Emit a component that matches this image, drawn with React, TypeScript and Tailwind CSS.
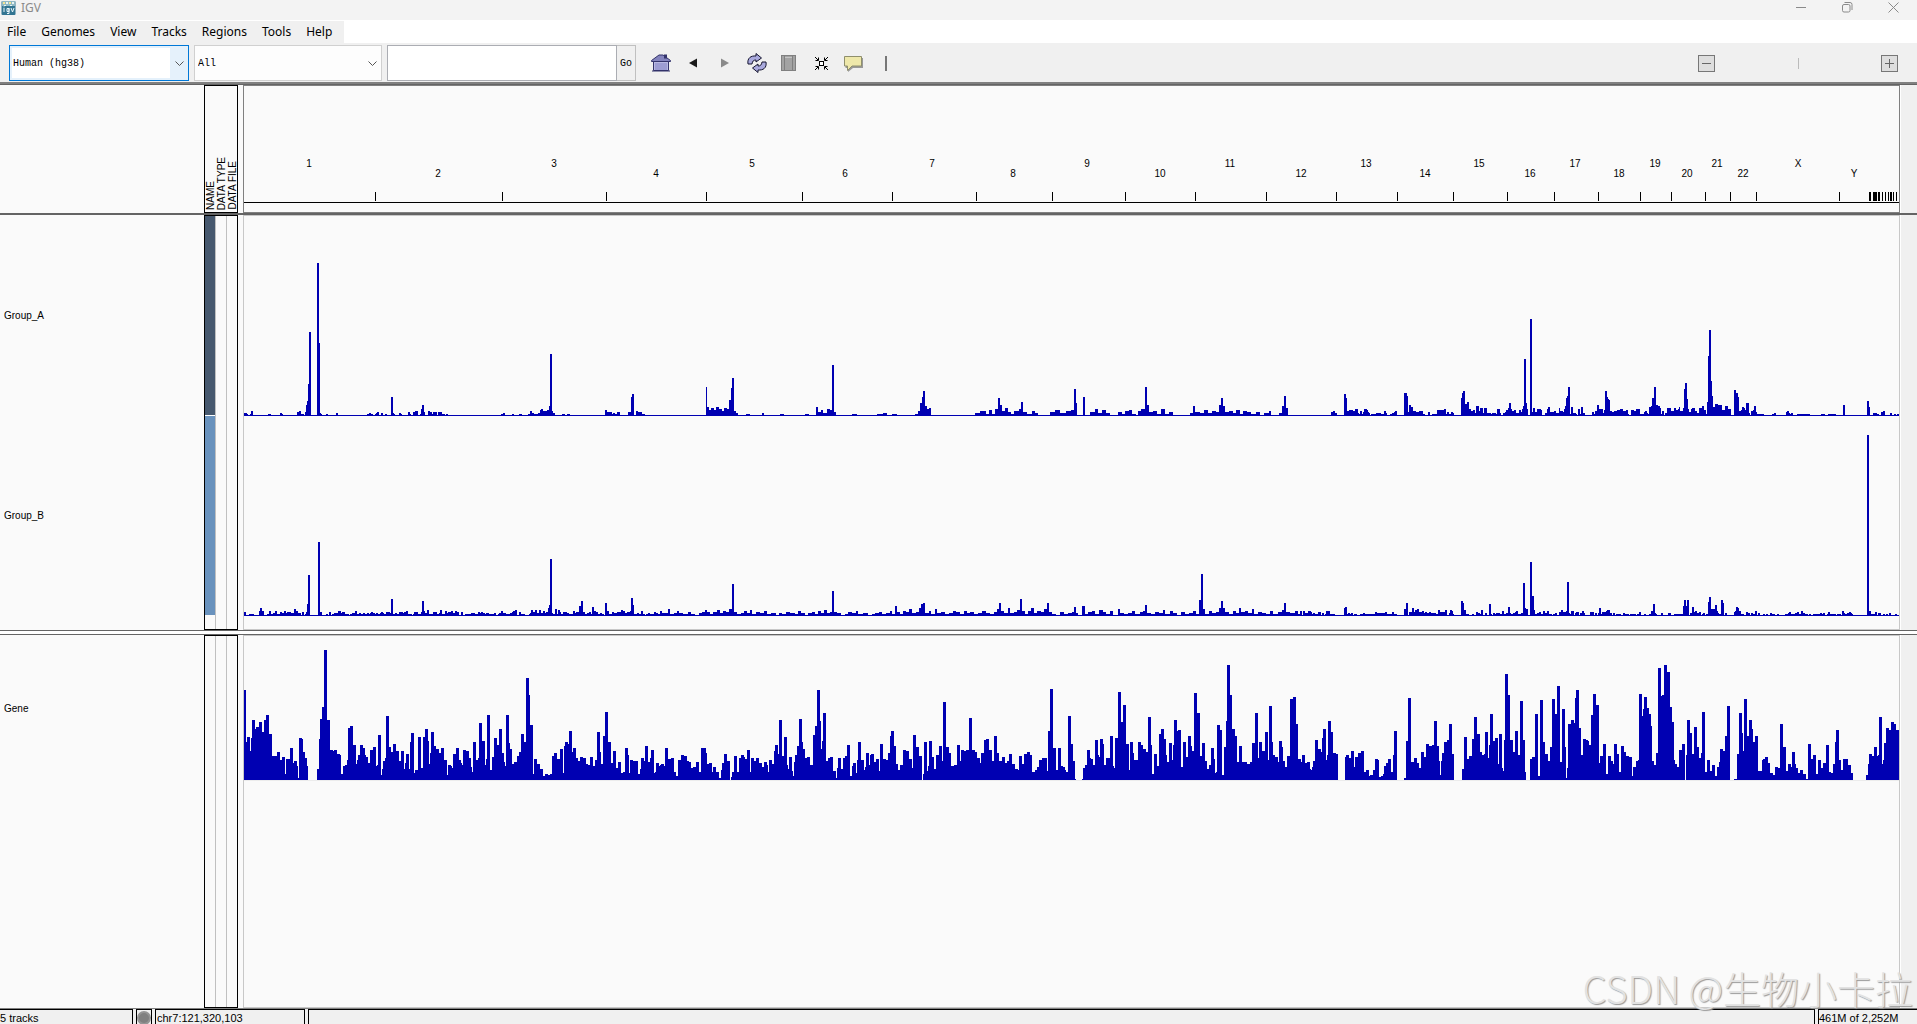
import React from 'react';

interface Segment {
  start: number;
  unit: number;
  base: number;
  steps: string;
}

interface Chromosome {
  name: string;
  x: number;
}

const PLOT_WIDTH = 1655;

const chromosomes: Chromosome[] = [
  { name: '1', x: 65 }, { name: '2', x: 194 }, { name: '3', x: 310 }, { name: '4', x: 412 },
  { name: '5', x: 508 }, { name: '6', x: 601 }, { name: '7', x: 688 }, { name: '8', x: 769 },
  { name: '9', x: 843 }, { name: '10', x: 916 }, { name: '11', x: 986 }, { name: '12', x: 1057 },
  { name: '13', x: 1122 }, { name: '14', x: 1181 }, { name: '15', x: 1235 }, { name: '16', x: 1286 },
  { name: '17', x: 1331 }, { name: '18', x: 1375 }, { name: '19', x: 1411 }, { name: '20', x: 1443 },
  { name: '21', x: 1473 }, { name: '22', x: 1499 }, { name: 'X', x: 1554 }, { name: 'Y', x: 1610 },
];

// [x, width]
const ticks = [
  [131, 1], [258, 1], [362, 1], [462, 1], [558, 1], [648, 1], [732, 1], [808, 1], [881, 1], [951, 1],
  [1022, 1], [1092, 1], [1153, 1], [1209, 1], [1263, 1], [1310, 1], [1354, 1], [1396, 1], [1427, 1],
  [1461, 1], [1486, 1], [1512, 1], [1595, 1], [1625, 2], [1629, 4], [1634, 2], [1638, 1], [1641, 1],
  [1644, 1], [1646, 2], [1649, 1], [1652, 1],
];

// every step is "x,top" and holds until the next x
const groupA: Segment[] = [
  {
    start: -162, unit: 1, base: 705,
    steps: '162,699 171,702 174,705 180,702 183,693 189,705 234,702 243,705 270,699 276,702 279,705 321,696 327,693 333,702 342,705 345,696 348,675 351,663 354,612 357,456 363,705 381,249 387,489 390,699 393,702 396,705 408,702 414,705 438,699 444,705 531,702 537,699 543,702 549,705 555,702 558,699 561,696 567,705 573,699 579,705 585,702 591,705 603,651 609,699 612,702 615,705 627,699 633,702 636,705 654,696 660,702 663,705 669,696 675,693 684,705 690,702 693,687 696,675 702,696 705,705 714,693 720,696 726,702 729,696 741,705 744,696 756,702 765,705 768,702 774,705 933,702 939,699 945,705 966,702 972,705 987,702 996,705 1014,702 1020,693 1026,699 1032,702 1044,699 1050,690 1053,687 1059,693 1071,690 1077,678 1080,522 1086,693 1089,699 1095,705 1116,702 1125,705 1131,702 1140,705 1245,690 1251,696 1266,702 1269,699 1275,702 1281,696 1290,705 1314,696 1323,651 1326,642 1332,705 1338,693 1344,696 1356,702 1365,705',
  },
  {
    start: 1278, unit: 1, base: 600,
    steps: '108,516 111,576 117,585 123,579 132,585 138,576 147,582 156,588 162,579 171,582 177,555 183,520 186,490 192,588 198,594 204,600 228,597 240,600 276,594 282,600 330,597 342,600 405,597 417,600 438,576 444,591 453,585 460,594 470,582 480,585 486,450 492,591 498,600 546,597 560,600 620,597 640,594 652,600 665,597 680,600 735,597 744,588 750,564 756,546 759,527 765,573 771,582 777,579 783,600 915,594 930,588 948,597 957,585 966,597 975,582 984,549 990,570 996,588 1005,579 1014,591 1023,597 1032,588 1047,582 1053,560 1059,591 1071,597 1086,588 1095,594 1104,600 1140,591 1155,585 1170,594 1188,588 1203,585 1212,522 1218,564 1221,600 1239,546 1245,600 1260,591 1275,582 1284,594 1296,585 1308,594 1320,600 1344,591 1356,597 1365,588 1377,585 1386,597 1398,600 1404,588 1413,582 1425,515 1431,570 1437,591 1449,588 1461,597 1473,582 1485,597 1497,591 1509,600 1560,594 1569,573 1575,591 1590,594 1602,585 1614,594 1626,588 1638,591 1647,570 1653,549 1659,573 1665,591 1677,588 1689,594 1698,585 1710,597 1719,588 1731,591 1743,597 1758,591 1770,600 1782,594 1797,588 1803,600 1827,594 1836,573 1842,544 1848,579 1854,600',
  },
  {
    start: 3168, unit: 1.1805, base: 345,
    steps: '79,336 84,333 89,339 94,345 112,282 117,294 119,333 125,330 135,333 140,327 147,339 150,342 152,333 158,342 160,336 163,327 170,330 173,336 175,339 178,345 180,342 193,339 206,342 213,333 218,339 221,345 229,342 234,339 239,336 241,333 246,345 264,279 271,288 274,336 277,315 282,321 287,333 295,336 302,333 313,342 318,345 325,336 330,345 335,342 348,330 366,327 371,342 374,336 379,342 384,336 389,339 391,345 409,294 412,279 414,273 419,312 424,306 429,327 434,333 440,330 445,339 447,318 454,333 457,324 464,339 468,324 474,333 475,339 485,342 488,339 498,342 501,327 508,339 512,345 515,339 521,336 524,330 528,324 531,309 536,327 538,333 544,330 549,339 557,330 562,336 565,327 567,318 569,177 574,309 577,327 579,345 585,57 590,336 592,324 597,336 602,327 612,330 615,345 623,339 628,327 630,321 635,336 645,333 650,339 658,324 662,333 668,336 671,327 673,318 676,294 679,288 681,261 686,342 689,321 694,339 701,342 704,345 706,327 711,342 714,321 719,339 724,345 742,336 747,342 750,333 755,315 760,327 770,339 773,330 775,273 780,291 783,297 785,300 788,333 793,336 798,333 806,330 813,327 821,333 828,330 834,342 836,345 841,330 849,333 854,327 864,342 874,336 877,333 882,339 885,342 887,321 892,318 895,294 900,261 905,315 910,318 915,324 917,342 920,333 925,345 928,339 933,324 943,333 950,324 956,330 960,327 963,321 966,333 973,324 976,267 978,249 983,297 986,327 988,336 994,327 997,324 1004,333 1009,339 1014,324 1022,318 1027,330 1032,342 1034,306 1037,168 1039,90 1044,243 1047,288 1050,321 1055,312 1062,315 1072,330 1080,318 1088,327 1095,345 1103,270 1108,279 1113,291 1116,333 1121,330 1123,321 1128,324 1131,330 1134,309 1140,306 1142,339 1144,345 1146,333 1151,330 1154,318 1159,336 1161,342 1179,345 1200,342 1205,339 1210,345 1235,336 1238,333 1243,339 1246,342 1248,339 1253,345 1263,342 1296,345 1324,342 1334,345 1342,342 1362,345 1380,315 1385,345 1441,303 1446,321 1449,345 1456,339 1466,342 1471,345 1477,336 1482,333 1487,345 1499,339 1504,345 1510,342 1514,345 1517,342 1522,345',
  },
];

const groupB: Segment[] = [
  {
    start: -162, unit: 1, base: 225,
    steps: '162,216 168,225 177,222 192,225 207,213 210,204 216,213 222,225 231,222 237,213 243,222 249,219 255,213 261,222 270,216 276,219 282,213 288,219 291,216 303,219 312,207 318,213 324,219 333,225 336,216 342,225 345,222 348,216 351,192 354,105 360,225 384,6 390,216 396,225 408,222 414,225 417,216 423,225 426,222 432,219 444,213 453,219 456,216 465,222 477,225 480,222 486,219 495,213 501,222 507,219 513,222 519,219 525,222 531,219 537,222 540,219 543,216 549,219 555,222 558,219 564,222 570,219 573,216 579,219 582,222 588,216 600,219 603,177 609,222 615,219 621,222 627,216 639,219 642,216 648,213 654,222 666,225 669,222 672,216 684,222 693,216 696,183 702,213 705,219 711,210 717,222 729,216 741,222 747,219 750,210 756,222 765,213 771,219 774,216 783,213 789,219 795,213 801,216 807,225 813,216 819,225 825,222 843,219 855,222 864,216 870,219 873,216 879,219 885,222 888,219 897,222 912,219 918,225 924,222 927,219 933,213 939,219 948,222 960,219 966,216 969,213 975,210 981,225 987,216 993,222 1005,225 1017,222 1020,219 1023,210 1029,216 1035,210 1041,219 1047,210 1053,219 1059,213 1065,219 1068,216 1074,204 1077,195 1080,57 1086,219 1089,222 1095,207 1101,222 1104,210 1110,216 1113,222 1119,216 1131,219 1137,222 1149,213 1155,219 1158,216 1167,198 1173,183 1179,216 1185,222 1191,219 1197,216 1203,222 1206,201 1212,213 1218,216 1224,222 1230,219 1236,222 1242,225 1245,189 1251,213 1257,222 1266,216 1272,219 1281,216 1293,210 1299,213 1305,219 1311,216 1320,213 1323,174 1329,195 1332,222 1341,219 1347,222 1353,213 1359,222 1365,225 1368,222 1374,219 1380,222 1392,216 1398,219 1404,222 1410,213 1416,219 1434,207 1440,222',
  },
  {
    start: 1278, unit: 1, base: 600,
    steps: '0,597 12,594 21,588 27,594 39,597 54,591 63,597 75,600 87,594 96,591 105,585 111,591 120,597 129,591 141,585 150,594 159,588 168,591 177,582 186,507 192,591 201,597 213,594 222,588 231,594 240,585 246,597 258,591 270,594 282,588 291,597 303,594 318,600 327,594 336,597 348,591 360,594 375,597 384,588 393,594 405,600 414,594 426,591 435,597 444,588 453,594 462,585 471,594 480,591 486,528 492,591 501,594 513,600 525,597 534,591 546,594 558,588 564,597 579,594 594,600 606,597 615,594 627,591 636,597 648,594 660,588 666,597 675,573 681,591 690,597 699,588 708,591 717,582 726,594 738,591 747,579 753,567 759,564 765,594 777,588 783,597 795,582 801,594 813,591 825,597 837,594 849,588 858,591 870,597 882,588 891,594 900,591 912,597 924,594 936,588 948,594 960,597 972,591 981,582 987,564 993,588 1002,594 1014,579 1020,594 1032,591 1041,585 1050,551 1056,588 1065,597 1074,588 1083,579 1092,594 1101,588 1113,591 1122,582 1131,564 1137,591 1146,597 1158,600 1170,591 1182,597 1194,594 1206,591 1212,576 1218,594 1224,600 1236,573 1245,597 1254,591 1266,588 1275,597 1287,585 1299,591 1308,597 1320,588 1329,600 1344,582 1350,594 1362,597 1374,594 1386,588 1395,597 1410,591 1419,588 1425,570 1431,594 1443,597 1455,591 1467,594 1479,585 1485,597 1500,588 1509,594 1521,600 1533,591 1545,597 1557,594 1569,588 1578,597 1587,555 1593,478 1599,582 1605,597 1617,588 1626,594 1638,591 1647,579 1653,558 1659,579 1665,591 1677,597 1689,588 1698,594 1707,579 1713,591 1725,588 1734,594 1746,582 1752,597 1764,591 1776,594 1788,597 1800,588 1809,597 1824,591 1836,585 1842,564 1848,591 1860,594 1875,588 1884,597',
  },
  {
    start: 3168, unit: 1.1805, base: 945,
    steps: '0,933 5,945 8,933 13,939 20,933 27,936 30,942 33,939 38,942 46,936 53,945 56,939 61,945 64,942 66,933 76,942 89,945 112,924 114,921 119,942 122,939 127,942 130,939 135,945 137,942 145,945 152,942 160,939 165,942 191,936 196,939 216,936 221,942 234,936 239,942 246,945 264,927 269,909 274,945 277,936 285,924 290,936 293,930 297,927 302,936 310,933 315,939 318,936 323,939 328,936 333,939 346,942 351,930 356,936 368,930 374,945 379,939 381,930 387,933 389,942 391,945 409,903 414,909 417,930 422,942 429,945 437,942 442,945 447,936 452,939 457,942 460,930 465,945 470,939 475,945 480,912 485,942 488,945 490,939 495,942 498,939 508,942 513,933 518,942 524,939 529,921 534,939 537,942 541,939 547,936 550,933 554,942 562,939 567,849 572,924 574,927 579,945 585,786 590,888 595,930 597,942 602,939 607,936 612,942 618,933 623,939 628,933 633,942 640,945 643,942 648,939 653,945 658,936 663,930 668,936 676,933 679,846 684,939 686,942 689,933 696,945 699,939 701,936 709,945 711,939 716,933 721,939 724,945 737,936 747,945 750,939 755,945 757,939 760,924 765,942 767,936 777,933 780,930 788,939 793,945 795,939 800,945 803,942 816,945 821,939 826,942 836,945 839,942 854,945 857,942 862,936 867,945 874,942 879,945 887,942 892,933 897,912 902,939 905,942 907,945 917,939 923,945 935,939 943,945 950,942 973,918 976,900 981,918 983,900 988,945 991,939 996,921 1001,936 1004,933 1009,939 1014,936 1019,945 1022,942 1024,939 1029,945 1032,942 1037,906 1039,891 1044,927 1055,915 1060,933 1062,939 1065,942 1070,900 1075,909 1078,945 1080,939 1085,945 1103,936 1106,933 1108,921 1113,924 1116,933 1121,942 1128,945 1133,936 1138,939 1144,945 1146,939 1151,942 1156,933 1161,945 1164,939 1169,945 1177,942 1182,945 1184,942 1189,945 1195,939 1200,942 1207,945 1212,942 1217,945 1233,942 1240,939 1243,936 1248,942 1258,939 1263,936 1268,942 1273,933 1278,939 1283,942 1291,945 1294,942 1299,945 1304,942 1322,939 1327,942 1329,939 1334,945 1339,942 1342,936 1347,942 1362,945 1365,942 1375,945 1377,933 1382,939 1385,942 1390,939 1395,936 1400,939 1403,942 1405,945 1441,405 1446,933 1451,942 1461,936 1466,945 1469,939 1476,945 1482,942 1487,945 1490,942 1494,945 1497,939 1502,945 1512,942 1517,945',
  },
];

const gene: Segment[] = [
  {
    start: -12, unit: 1, base: 420,
    steps: '12,150 18,306 21,291 30,333 33,294 36,240 45,267 48,261 57,246 66,276 72,240 78,225 87,282 96,348 111,336 120,360 126,351 135,402 138,357 150,324 159,369 162,363 171,378 174,414 177,294 186,297 189,336 195,354 201,378 204,420 231,387 237,297 240,237 246,201 252,30 261,240 270,330 279,333 282,330 291,342 300,345 303,402 309,378 315,375 321,360 324,264 330,258 339,315 348,372 351,360 354,345 360,315 369,324 375,345 378,351 384,369 390,330 399,321 408,378 411,375 414,285 423,405 426,387 429,363 435,354 438,228 447,321 453,336 459,312 468,333 477,363 483,333 492,387 495,369 498,342 507,387 510,306 513,279 522,399 525,390 534,291 543,384 549,291 555,267 564,303 567,372 570,339 573,276 582,318 588,327 597,339 603,324 612,360 621,405 624,375 633,378 636,384 639,342 648,324 657,360 663,369 666,375 669,330 678,333 687,354 693,381 696,396 699,306 708,360 714,354 717,249 726,303 735,375 738,357 741,225 750,390 756,351 762,294 771,315 777,267 786,339 792,366 795,378 798,225 807,309 810,327 816,372 822,366 831,348 837,336 843,282 852,306 858,114 867,165 870,255 879,402 882,357 891,372 900,387 909,408 915,402 924,405 930,402 936,348 942,339 951,357 960,327 969,399 972,318 975,306 984,312 987,273 996,336 999,324 1008,354 1014,363 1020,351 1029,354 1038,372 1044,375 1050,351 1059,378 1065,360 1071,276 1080,336 1083,372 1089,288 1095,216 1104,306 1113,369 1119,333 1128,384 1134,366 1143,399 1149,396 1155,324 1164,345 1167,399 1170,360 1179,363 1194,402 1200,387 1203,354 1212,363 1215,318 1224,366 1230,354 1233,330 1242,399 1245,396 1248,369 1257,378',
  },
  {
    start: 1248, unit: 1, base: 420,
    steps: '0,375 3,372 12,378 15,324 24,357 33,354 42,396 48,408 54,360 63,345 72,348 81,363 87,366 93,384 99,381 108,366 117,396 123,324 138,339 141,372 147,369 156,396 159,381 168,396 177,414 183,390 186,369 192,342 201,363 210,420 213,411 216,396 222,348 231,396 237,354 243,345 252,351 255,357 261,330 270,396 273,354 282,363 288,354 297,369 306,381 312,366 321,375 324,396 327,360 336,372 342,333 345,315 354,342 357,240 366,348 372,291 381,375 384,387 387,351 396,393 399,408 402,366 405,345 411,318 417,237 426,306 429,327 435,354 441,351 450,375 459,285 465,258 471,150 480,243 483,327 486,303 489,219 498,363 504,354 510,351 519,393 528,414 531,384 534,354 543,387 549,354 555,348 561,315 570,408 576,378 579,369 588,399 591,360 594,306 603,360 612,390 615,381 618,339 627,375 630,345 633,342 642,366 648,357 657,393 660,312 669,357 678,360 684,339 690,288 693,273 702,318 708,372 714,390 720,375 729,330 738,333 747,357 756,384 759,285 768,321 777,348 786,420 789,402 792,306 801,393 804,378 807,303 816,351 822,387 828,345 837,318 846,363 849,186 858,321 867,339 873,378 882,375 891,315 900,363 903,330 912,333 918,330 927,234 936,330 945,336 951,354 960,369 963,339 972,300 978,297 987,330 996,363 1002,288 1011,339 1017,363 1026,351 1035,369 1041,363 1047,342 1056,372 1065,387 1074,390 1077,348 1086,372 1092,342 1101,336 1110,345 1116,396 1125,390 1131,381 1137,360 1146,354 1161,393 1164,273 1170,147 1179,324 1188,390 1194,324 1203,378 1209,381 1215,390 1218,396 1224,228 1233,312 1239,363 1245,417 1248,420',
  },
  {
    start: 2508, unit: 1, base: 420,
    steps: '6,417 9,384 15,375 21,330 30,354 33,357 39,375 45,300 54,345 57,351 60,297 69,312 72,375 78,354 90,288 99,378 102,384 105,294 114,156 123,246 129,195 138,312 147,390 150,306 159,339 162,360 174,306 183,315 189,327 198,336 204,231 213,315 216,402 222,342 231,378 237,282 243,267 252,297 258,345 261,366 267,309 276,360 279,315 282,240 291,273 294,270 303,381 309,306 318,351 324,288 333,318 336,333 342,159 351,219 360,348 366,309 375,363 381,387 387,375 393,324 402,357 405,399 408,396 411,255 420,270 426,405 432,321 438,243 441,75 450,165 456,267 465,288 471,366 477,318 486,366 501,372 510,366 516,309 525,219 534,354 537,306 546,333 555,276 564,360 567,198 576,306 579,345 585,351 594,366 597,303 606,321 609,363 615,381 621,348 630,177 639,171 648,252 654,357 663,366 666,345 675,369 681,366 690,387 693,390 696,381 699,363 705,300 714,327 723,336 726,294 729,267 738,360 741,345 744,243 753,276 759,339 768,342 774,420 795,351 798,345 807,354 813,333 822,381 825,351 834,339 843,333 852,396 858,390 867,408 870,405 879,390 885,357 894,360 897,411 903,408 909,402 912,378 918,369 924,357 933,396 939,345 942,273 951,420 972,414 978,303 984,174 993,366 1002,354 1011,369 1017,384 1023,336 1032,351 1038,312 1047,318 1056,315 1062,243 1071,318 1077,363 1080,405 1083,363 1086,339 1092,306 1101,300 1107,252 1116,342 1122,420 1146,387 1152,291 1161,357 1167,348 1176,297 1182,231 1191,282 1200,336 1206,345 1212,342 1215,276 1224,354 1227,315',
  },
  {
    start: 3738, unit: 1, base: 420,
    steps: '0,222 9,303 15,294 24,372 27,282 36,384 39,393 42,300 45,102 54,165 60,300 69,336 75,273 84,345 90,183 99,300 105,396 108,420 120,357 126,351 135,222 144,408 150,180 159,306 165,342 174,363 180,321 186,177 195,222 201,138 210,366 216,207 225,321 228,414 231,384 234,252 243,240 252,249 255,174 258,150 267,264 273,345 279,297 288,300 294,303 297,315 303,225 309,162 318,195 327,369 330,348 339,312 348,402 354,348 363,363 369,372 372,312 381,342 387,396 393,318 402,336 408,348 417,351 426,408 429,381 438,363 444,360 447,162 456,228 459,207 462,171 471,204 477,222 483,258 486,363 492,375 498,339 504,84 513,168 516,165 522,75 531,96 540,201 546,246 552,360 555,372 561,381 567,330 576,312 585,420 588,345 591,240 600,279 606,342 612,261 621,321 627,354 633,339 636,216 645,396 651,360 660,393 666,375 675,408 681,381 687,366 690,327 699,333 705,288 711,198 720,420 732,417 741,342 747,219 756,279 759,333 762,177 771,288 777,240 786,267 789,306 795,288 804,393 816,360 819,357 825,351 834,369 840,399 849,405 855,381 864,384 870,252 879,321 888,393 894,372 903,381 906,336 915,372 918,384 924,399 930,390 939,402 948,417 954,312 963,357 969,345 978,402 984,360 993,384 999,369 1008,315 1017,396 1023,399 1029,372 1035,306 1038,270 1047,360 1053,390 1059,357 1074,375 1083,399 1089,420 1128,405 1134,372 1137,342 1146,348 1152,321 1161,348 1164,345 1167,231 1176,372 1179,360 1182,309 1188,264 1197,270 1203,246 1212,252 1218,270 1227,420',
  },
];

const toPath = (segments: Segment[], floor: number) => {
  let d = `M0 ${floor}`;
  segments.forEach(({ start, unit, base, steps }) => {
    steps.split(' ').forEach((step) => {
      const [x, top] = step.split(',').map(Number);
      const px = Math.round((start + x * unit) / 3) * 3;
      d += `H${px}V${floor - (base - top)}`;
    });
  });
  return `${d}H${PLOT_WIDTH * 3}V${floor}Z`;
};

const Histogram: React.FC<{ label: string; segments: Segment[]; height: number; line: string }> = ({
  label,
  segments,
  height,
  line,
}) => (
  <svg
    role="img"
    aria-label={label}
    className="block w-full"
    height={height}
    viewBox={`0 0 ${PLOT_WIDTH * 3} ${height * 3}`}
    preserveAspectRatio="none"
    shapeRendering="crispEdges"
  >
    <rect x="0" y={height * 3 - 3} width={PLOT_WIDTH * 3} height="3" fill={line} />
    <path d={toPath(segments, height * 3 - 3)} fill="#0000b2" />
  </svg>
);

const percent = (x: number) => `${(x / PLOT_WIDTH) * 100}%`;

const Ruler: React.FC = () => (
  <svg className="block w-full h-full" shapeRendering="crispEdges">
    {chromosomes.map((c, i) => (
      <text
        key={c.name}
        x={percent(c.x)}
        y={i % 2 === 0 ? 81 : 91}
        textAnchor="middle"
        className="text-[10px] font-['Liberation_Sans',sans-serif]"
      >
        {c.name}
      </text>
    ))}
    {ticks.map(([x, w]) => (
      <rect key={x} x={percent(x)} y="106" width={w} height="9" />
    ))}
    <rect x="0" y="116" width="100%" height="1" />
  </svg>
);

interface PanelProps {
  names?: React.ReactNode;
  attributes: React.ReactNode;
  className: string;
  plotClass: string;
  children: React.ReactNode;
}

const Panel: React.FC<PanelProps> = ({ names, attributes, className, plotClass, children }) => (
  <section className={`flex bg-[#fafafa] ${className}`}>
    <div className="w-[204px] shrink-0 flex flex-col pl-1">{names}</div>
    <div className="w-[34px] shrink-0 border border-black flex">{attributes}</div>
    <div className="w-[5px] shrink-0"></div>
    <div className={`flex-1 min-w-0 border ${plotClass}`}>{children}</div>
    <div className="w-[17px] shrink-0 bg-[#f0f0f0] border-l border-white"></div>
  </section>
);

const AttributeColumns: React.FC<{ children?: React.ReactNode }> = ({ children }) => (
  <>
    <div className="flex-1 flex flex-col">{children}</div>
    <div className="flex-1 border-x border-[#c0c0c0] basis-[2px]"></div>
    <div className="flex-1"></div>
  </>
);

const Chevron: React.FC = () => (
  <svg className="absolute right-1 top-[13px] pointer-events-none" width="9" height="9" viewBox="0 0 9 9" fill="none" stroke="#555">
    <path d="M0.5 2.5l4 4 4-4" />
  </svg>
);

const ToolButton: React.FC<{ label: string; children: React.ReactNode }> = ({ label, children }) => (
  <button type="button" aria-label={label} className="w-8 h-full flex items-center justify-center">
    <svg width="20" height="20" viewBox="0 0 20 20">{children}</svg>
  </button>
);

const TitleBar: React.FC = () => (
  <header className="h-5 shrink-0 flex items-start bg-[#f3f3f3]">
    <svg className="ml-px mt-px" width="15" height="14" viewBox="0 0 15 14">
      <rect x="0.5" width="14" height="14" rx="1" fill="#327592" />
      <rect x="1" width="13" height="5" fill="#8fb8c4" />
      <path d="M2 1h2v2H2zM8 1h2v2H8z" fill="#f2e394" />
      <path d="M5 1h2v2H5zM11 1h2v2h-2zM3 4h2v1H3zM9 4h2v1H9z" fill="#e9f4f4" />
      <path d="M3 7v4M3 5.500v.8M8 7.500H6v3h2zM8 7v5.500H6M10 7l1.500 4L13 7" stroke="#eaf6fa" fill="none" />
    </svg>
    <h1 className="ml-[5px] text-xs leading-4 text-[#8a8a8a]">IGV</h1>
    <div className="ml-auto mr-px flex">
      <button type="button" aria-label="Minimize" className="w-[46px] h-[15px] flex items-center justify-center">
        <svg width="11" height="11" viewBox="0 0 11 11" stroke="#8a8a8a"><path d="M0 5.500h10" /></svg>
      </button>
      <button type="button" aria-label="Restore" className="w-[46px] h-[15px] flex items-center justify-center">
        <svg width="11" height="11" viewBox="0 0 11 11" stroke="#8a8a8a" fill="none">
          <rect x="0.5" y="2.500" width="7.500" height="7.500" rx="1.500" />
          <path d="M2.500 0.500h5.500a2 2 0 0 1 2 2v5.500" />
        </svg>
      </button>
      <button type="button" aria-label="Close" className="w-[46px] h-[15px] flex items-center justify-center">
        <svg width="11" height="11" viewBox="0 0 11 11" stroke="#8a8a8a"><path d="M0.500 0.500l10 10M10.500 0.500l-10 10" /></svg>
      </button>
    </div>
  </header>
);

const menus = ['File', 'Genomes', 'View', 'Tracks', 'Regions', 'Tools', 'Help'];

const MenuBar: React.FC = () => (
  <nav className="h-[23px] shrink-0 bg-white pt-px flex">
    <div className="flex bg-[#f0f0f0] pr-1">
      {menus.map((menu) => (
        <button key={menu} type="button" className="pl-[7px] pr-2 text-xs leading-5 text-black">
          {menu}
        </button>
      ))}
    </div>
  </nav>
);

const Toolbar: React.FC = () => (
  <div className="h-[39px] shrink-0 bg-[#f0f0f0] flex items-stretch pl-[9px] pt-0.5 pb-px pr-[19px] font-['Liberation_Mono',monospace] text-[10px]">
    <div className="relative w-[180px] border border-[#0078d7] bg-[#e5f1fb] p-0.5 pr-[18px]">
      <select aria-label="Genome" className="appearance-none w-full h-full bg-white pl-px outline-none">
        <option>Human (hg38)</option>
      </select>
      <Chevron />
    </div>
    <div className="relative ml-[5px] w-[188px] border border-[#d0d0d0] bg-[#fdfdfd]">
      <select aria-label="Chromosome" className="appearance-none w-full h-full pl-[3px] outline-none">
        <option>All</option>
      </select>
      <Chevron />
    </div>
    <input aria-label="Locus" className="ml-[5px] w-[230px] border border-[#abadb3] bg-white outline-none" />
    <button type="button" className="w-[19px] border border-l-0 border-[#c0c0c0] text-center">Go</button>
    <div className="flex ml-[9px]">
      <ToolButton label="Home">
        <path d="M0.500 7.500L8 2h4l7.500 5.500v1h-19z" fill="#8383bd" stroke="#33336b" />
        <path d="M13 1.500h3v4h-3z" fill="#33336b" />
        <path d="M2.500 8.500h15v9h-15z" fill="#b9b9e3" stroke="#33336b" />
        <path d="M4 10h12v7H4z" fill="#9d9dd3" />
        <path d="M1 18h18" stroke="#33336b" />
      </ToolButton>
      <ToolButton label="Back">
        <path d="M6 10l8-4.500v9z" fill="#1a1a1a" />
      </ToolButton>
      <ToolButton label="Forward">
        <path d="M14 10l-8-4.500v9z" fill="#8a8a8a" />
      </ToolButton>
      <ToolButton label="Refresh">
        <path d="M1 11C0 5 4 2.500 9 3V0.500L14.500 5 9 9V7C6.500 7 5.500 8 5 11z" fill="#a9a9dd" stroke="#15152f" />
        <path d="M19 9c1 6-3 8.500-8 8v2.500L5.500 15l5.500-4v2c2.500 0 3.500-1 4-4z" fill="#a9a9dd" stroke="#15152f" />
      </ToolButton>
      <ToolButton label="Region of interest">
        <rect x="2.500" y="2.500" width="14" height="15" fill="#a3a3a3" stroke="#808080" />
        <path d="M5.500 3v14M13.500 3v14" stroke="#808080" />
        <path d="M6 4.500h7" stroke="#c4c4c4" />
      </ToolButton>
      <ToolButton label="Fit to window">
        <rect x="8.500" y="8.500" width="4" height="4" fill="#fff" stroke="#000" />
        <path d="M4 4l3 3M17 4l-3 3M4 17l3-3M17 17l-3-3M4.500 7.500h3v-3M16.500 7.500h-3v-3M4.500 13.500h3v3M16.500 13.500h-3v3" stroke="#000" fill="none" />
      </ToolButton>
      <ToolButton label="Popup behavior">
        <path d="M2.500 5v10H5v4l5-4h10V5z" fill="#999" />
        <path d="M1.500 3.500h17v9.500H9l-4.500 4.500V13h-3z" fill="#eee8aa" stroke="#8f8f6c" />
      </ToolButton>
      <div className="ml-4 w-0.5 h-[15px] self-center bg-[#777]"></div>
    </div>
    <div className="ml-auto flex items-center">
      <button type="button" aria-label="Zoom out" className="w-[17px] h-[17px] border border-[#777] bg-[#dedede] flex items-center justify-center">
        <svg width="9" height="9" viewBox="0 0 9 9" stroke="#666"><path d="M0 4.500h9" /></svg>
      </button>
      <div className="w-[166px] flex justify-center"><div className="w-px h-[11px] bg-[#bbb]"></div></div>
      <button type="button" aria-label="Zoom in" className="w-[17px] h-[17px] border border-[#777] bg-[#dedede] flex items-center justify-center">
        <svg width="9" height="9" viewBox="0 0 9 9" stroke="#666"><path d="M0 4.500h9M4.500 0v9" /></svg>
      </button>
    </div>
  </div>
);

const StatusBar: React.FC = () => (
  <footer className="h-4 shrink-0 flex bg-[#f0f0f0] border-t border-[#808080] overflow-hidden text-[11px] leading-4 font-['Liberation_Sans',sans-serif] whitespace-nowrap">
    <div className="w-[133px] h-5 border-t border-r border-black">5 tracks</div>
    <div className="ml-[3px] w-4 h-5 border border-black pt-px">
      <div className="w-3.5 h-3.5 rounded-full bg-[#808080] border-2 border-[#959595]"></div>
    </div>
    <div className="ml-[3px] w-[150px] h-5 border border-black pl-px">chr7:121,320,103</div>
    <div className="ml-[3px] flex-1 h-5 border border-black"></div>
    <div className="ml-[3px] w-[99px] h-5 border border-r-0 border-black">461M of 2,252M</div>
  </footer>
);

const App: React.FC = () => (
  <div className="relative h-screen flex flex-col overflow-hidden bg-white text-black font-['Noto_Sans',sans-serif]">
    <TitleBar />
    <MenuBar />
    <Toolbar />
    <div className="h-[3px] shrink-0 bg-[#808080] border-b border-[#646464]"></div>

    <Panel
      className="h-32 shrink-0"
      plotClass="border-[#808080]"
      attributes={
        <div className="flex text-[10px] leading-[11px] font-['Liberation_Sans',sans-serif] pb-[2px] items-end">
          {['NAME', 'DATA TYPE', 'DATA FILE'].map((name) => (
            <span key={name} className="[writing-mode:vertical-rl] rotate-180 whitespace-nowrap">{name}</span>
          ))}
        </div>
      }
    >
      <Ruler />
    </Panel>
    <div className="h-0.5 shrink-0 bg-[#646464]"></div>

    <Panel
      className="h-[415px] shrink-0"
      plotClass="border-[#c8c8c8]"
      names={
        <>
          <div className="h-[200px] flex items-center text-[10px] font-['Liberation_Sans',sans-serif]">Group_A</div>
          <div className="h-[200px] flex items-center text-[10px] font-['Liberation_Sans',sans-serif]">Group_B</div>
        </>
      }
      attributes={
        <AttributeColumns>
          <div className="h-[200px] bg-[#46586e] border-b border-white"></div>
          <div className="h-[199px] bg-[#6992bd]"></div>
        </AttributeColumns>
      }
    >
      <Histogram label="Group_A" segments={groupA} height={200} line="#0000b2" />
      <Histogram label="Group_B" segments={groupB} height={200} line="#0000b2" />
    </Panel>
    <div className="h-[5px] shrink-0 bg-white border-y border-[#646464]"></div>

    <Panel
      className="flex-1 min-h-0"
      plotClass="border-[#c8c8c8]"
      names={<div className="h-[146px] flex items-center text-[10px] font-['Liberation_Sans',sans-serif]">Gene</div>}
      attributes={<AttributeColumns />}
    >
      <Histogram label="Gene" segments={gene} height={145} line="#ececec" />
    </Panel>
    <StatusBar />

    <div className="absolute right-1 bottom-2 text-[38px] leading-[56px] text-[#e2e2e2] [text-shadow:1px_1px_1px_#999] font-light font-['Noto_Sans_CJK_SC',sans-serif] whitespace-nowrap pointer-events-none">
      CSDN @生物小卡拉
    </div>
  </div>
);

export default App;
